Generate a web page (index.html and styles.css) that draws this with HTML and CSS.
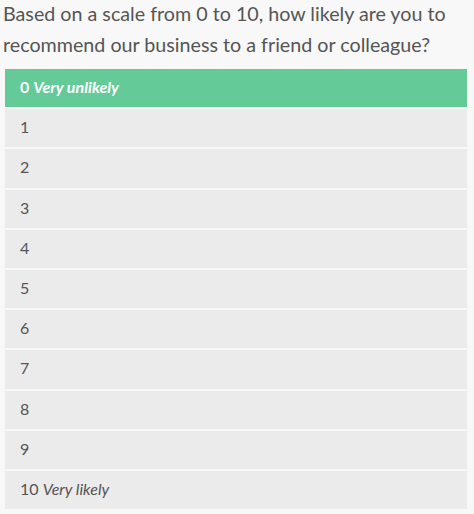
FILE: index.html
```html
<!DOCTYPE HTML>
<html>

<head>
    <meta name="viewport" content="width=device-width, initial-scale=1">
    <title>Recommend survey</title>
    <link rel="stylesheet" href="styles.css">
</head>

<body>
    <h2 class="question">Based on a scale from 0 to 10, how likely are you to recommend our business to a friend or colleague?</h2>
    <div class="options">
        <div class="option selected">0 <em>Very unlikely</em></div>
        <div class="option">1</div>
        <div class="option">2</div>
        <div class="option">3</div>
        <div class="option">4</div>
        <div class="option">5</div>
        <div class="option">6</div>
        <div class="option">7</div>
        <div class="option">8</div>
        <div class="option">9</div>
        <div class="option">10 <em>Very likely</em></div>
    </div>
</body>

</html>
```

FILE: styles.css
```css
html {
    font-family: Lato, "Open Sans", sans-serif;
    background: #f8f8f8;
}

body {
    margin: 0px;
    color: #555;
}

.question {
    font-size: 19.7px;
    font-weight: normal;
    line-height: 31px;
    margin: -2px 0 0 0;
    padding: 0 10px 0 3px;
}

.options {
    display: flex;
    flex-direction: column;
    gap: 2px;
    margin: 9px 7px 0 5px;
}

.option {
    height: 38.2px;
    line-height: 36px;
    padding: 0 15px;
    font-size: 16px;
    background: #ebebeb;
}

.option.selected {
    background: #64ca98;
    color: #fff;
    font-weight: bold;
}
```
